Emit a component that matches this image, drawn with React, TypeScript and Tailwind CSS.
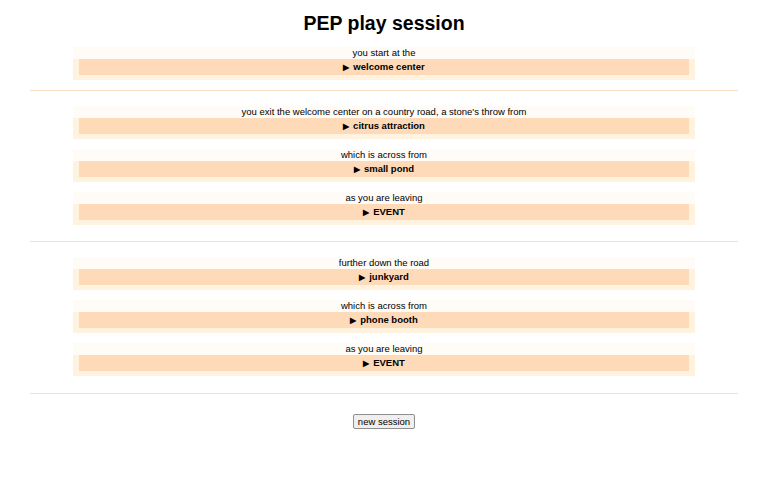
import React from "react";

const Block = ({ label, item }: { label: string; item: string }) => (
  <div className="w-[622px] mx-auto bg-[#fff2df] pb-[5px]">
    <div className="bg-[#fffbf6] h-[12px] leading-[12px] text-[9.5px] text-black text-center">{label}</div>
    <div className="mx-[6px] bg-[#ffdab9] h-[16px] leading-[16px] text-[9.5px] font-bold text-black text-center">
      <span className="text-[8px] mr-[4px]">▶</span>
      {item}
    </div>
  </div>
);

const Hr = () => <div className="mx-[30px] h-[1px] bg-[#fcdfc2]" />;

export default function App() {
  return (
    <div className="w-[768px] h-[480px] bg-white" style={{ fontFamily: '"Liberation Sans", Arial, sans-serif' }}>
      <h1 className="text-center text-[19.5px] font-bold text-black pt-[11px] leading-[24px]">PEP play session</h1>
      <div className="mt-[12px]">
        <Block label="you start at the" item="welcome center" />
      </div>
      <div className="mt-[10px]"><Hr /></div>
      <div className="mt-[15px] flex flex-col gap-[10px]">
        <Block label="you exit the welcome center on a country road, a stone's throw from" item="citrus attraction" />
        <Block label="which is across from" item="small pond" />
        <Block label="as you are leaving" item="EVENT" />
      </div>
      <div className="mt-[16px]"><Hr /></div>
      <div className="mt-[15px] flex flex-col gap-[10px]">
        <Block label="further down the road" item="junkyard" />
        <Block label="which is across from" item="phone booth" />
        <Block label="as you are leaving" item="EVENT" />
      </div>
      <div className="mt-[17px]"><Hr /></div>
      <div className="mt-[20px] flex justify-center">
        <button className="h-[15px] px-[4px] text-[9.5px] leading-[13px] text-black bg-[#efefef] border border-[#8f8f8f] rounded-[2px]">
          new session
        </button>
      </div>
    </div>
  );
}
